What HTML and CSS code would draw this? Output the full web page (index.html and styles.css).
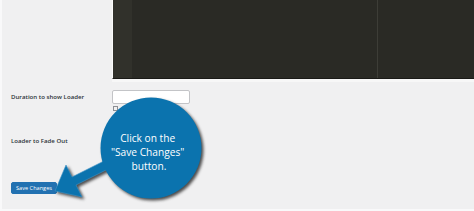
FILE: index.html
```html
<!DOCTYPE html>
<html lang="en">
<head>
<meta charset="UTF-8">
<meta name="viewport" content="width=device-width, initial-scale=1.0">
<title>Loader settings</title>
<link rel="stylesheet" href="styles.css">
</head>
<body>
    <div class="screen">
        <form class="settings">
            <div class="row row-editor">
                <div class="label"></div>
                <div class="field">
                    <div class="editor">
                        <div class="gutter"></div>
                        <div class="code"></div>
                        <div class="code-side"></div>
                    </div>
                </div>
            </div>

            <div class="row row-duration">
                <label class="label" for="duration">Duration to show Loader</label>
                <div class="field">
                    <input type="text" id="duration" class="text-input">
                    <span class="check"></span>
                </div>
            </div>

            <div class="row row-fade">
                <label class="label">Loader to Fade Out</label>
                <div class="field"></div>
            </div>

            <button type="button" class="save-btn">Save Changes</button>
        </form>

        <!-- tutorial callout over the page -->
        <svg class="callout" viewBox="0 0 474 211" width="474" height="211">
            <g class="callout-shape">
                <polygon points="108,159 72,177 66,165 55,191 82,197 76,185 112,167" />
                <circle cx="151" cy="148" r="50.5" />
            </g>
            <text class="callout-text" x="149" text-anchor="middle">
                <tspan x="149" y="141.5">Click on the</tspan>
                <tspan x="149" y="156">"Save Changes"</tspan>
                <tspan x="149" y="169.5">button.</tspan>
            </text>
        </svg>
    </div>
</body>
</html>
```

FILE: styles.css
```css
body {
    margin: 0;
    padding: 0;
    font-family: "Open Sans", Arial, sans-serif;
    background-color: #f0f0f1;
}

.screen {
    width: 474px;
    height: 211px;
    box-sizing: border-box;
    background-color: #f0f0f1;
    border-left: 2px solid #f9f9fa;
    border-bottom: 2px solid #f9f9fa;
    position: relative;
    overflow: hidden;
}

.settings {
    padding-left: 9px;
}

.row {
    display: grid;
    grid-template-columns: 101px 1fr;
}

.label {
    font-size: 6.1px;
    font-weight: 600;
    line-height: 14px;
    color: #2c3338;
}

/* code editor block */
.editor {
    height: 78px;
    display: flex;
    background-color: #2a2a25;
    border-left: 1px solid #fbfbfb;
    border-bottom: 1px solid #1a1a17;
    box-shadow: 0 3px 0 #f7f7f7;
}

.editor .gutter {
    width: 19px;
    background-color: #31312b;
}

.editor .code {
    width: 245px;
    border-right: 1px solid #3d3d37;
}

.editor .code-side {
    flex: 1;
}

.row-duration {
    padding-top: 11px;
}

.text-input {
    display: block;
    width: 78px;
    height: 14px;
    box-sizing: border-box;
    margin: 0;
    padding: 0 3px;
    border: 1px solid #c3c4c7;
    border-radius: 2px;
    background-color: #fff;
}

.check {
    display: block;
    width: 5px;
    height: 5px;
    margin-top: 2px;
    margin-left: 1px;
    border: 1px solid #8c8f94;
    box-sizing: border-box;
}

.row-fade {
    padding-top: 23px;
}

.save-btn {
    display: block;
    margin-top: 34px;
    width: 46px;
    height: 12px;
    padding: 0;
    border: 1px solid #2271b1;
    border-radius: 2px;
    background-color: #2271b1;
    color: #fff;
    font-family: "Open Sans", Arial, sans-serif;
    font-size: 5.6px;
    line-height: 10px;
}

.callout {
    position: absolute;
    left: -2px;
    top: 0;
}

.callout-shape {
    fill: #0b73ae;
    filter: drop-shadow(2px 2px 1.5px rgba(20, 20, 20, 0.75));
}

.callout-shape polygon {
    stroke: #3f93c8;
    stroke-width: 0.6;
}

.callout-text {
    fill: #fff;
    font-family: "Open Sans", Arial, sans-serif;
    font-size: 10.2px;
}
```
